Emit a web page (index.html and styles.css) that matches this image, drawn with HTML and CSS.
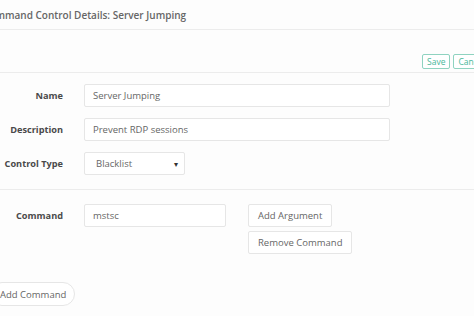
FILE: index.html
```html
<!DOCTYPE html>
<html lang="en">
<head>
    <meta charset="UTF-8">
    <meta name="viewport" content="width=device-width, initial-scale=1.0">
    <title>Command Control Details</title>
    <link rel="stylesheet" href="styles.css">
</head>
<body>
    <div class="header">
        <h1>Command Control Details: Server Jumping</h1>
    </div>

    <div class="toolbar">
        <button class="btn-outline">Save</button>
        <button class="btn-outline">Cancel</button>
    </div>

    <div class="section">
        <div class="form-row">
            <label for="name">Name</label>
            <input type="text" id="name" value="Server Jumping">
        </div>
        <div class="form-row">
            <label for="description">Description</label>
            <input type="text" id="description" value="Prevent RDP sessions">
        </div>
        <div class="form-row">
            <label for="controlType">Control Type</label>
            <div class="select">
                <span>Blacklist</span>
                <span class="caret">&#9662;</span>
            </div>
        </div>
    </div>

    <div class="commands">
        <div class="command-row">
            <label for="command">Command</label>
            <input type="text" id="command" class="short" value="mstsc">
            <div class="command-actions">
                <button class="btn">Add Argument</button>
                <button class="btn">Remove Command</button>
            </div>
        </div>
        <button class="btn btn-pill">Add Command</button>
    </div>
</body>
</html>
```

FILE: styles.css
```css
body {
    margin: 0;
    font-family: 'Open Sans', sans-serif;
    background-color: #fdfdfd;
    color: #555;
    overflow: hidden;
}
.header {
    height: 29px;
    border-bottom: 1px solid #ececec;
    display: flex;
    align-items: center;
}
h1 {
    margin: 0 0 0 -17px;
    font-size: 10px;
    font-weight: 600;
    color: #666;
    white-space: nowrap;
}
.toolbar {
    display: flex;
    gap: 3px;
    padding: 24px 0 3px 422px;
    border-bottom: 1px solid #ececec;
    white-space: nowrap;
}
.btn-outline {
    background: #fff;
    border: 1px solid #8fd3c0;
    border-radius: 2px;
    color: #49b79a;
    font-family: 'Open Sans', sans-serif;
    font-size: 8.5px;
    height: 15px;
    padding: 0 4px;
    line-height: 13px;
}
.section {
    padding: 11px 0 14px 0;
    border-bottom: 1px solid #ececec;
    display: flex;
    flex-direction: column;
    gap: 11px;
}
.form-row, .command-row {
    display: flex;
    align-items: center;
    gap: 21px;
}
.command-row {
    align-items: flex-start;
}
label {
    width: 63px;
    text-align: right;
    font-size: 9.2px;
    font-weight: 700;
    color: #4a4a4a;
    white-space: nowrap;
    line-height: 23px;
}
input, .select {
    box-sizing: border-box;
    height: 23px;
    width: 306px;
    padding: 0 8px;
    border: 1px solid #e6e6e6;
    border-radius: 2px;
    background: #fff;
    font-family: 'Open Sans', sans-serif;
    font-size: 9.5px;
    color: #666;
}
.select {
    width: 101px;
    display: flex;
    align-items: center;
    justify-content: space-between;
    padding: 0 6px 0 11px;
}
.caret {
    font-size: 8px;
    color: #333;
}
.commands {
    padding: 14px 0 0 0;
}
input.short {
    width: 142px;
}
.command-actions {
    display: flex;
    flex-direction: column;
    align-items: flex-start;
    gap: 4px;
    margin-left: 1px;
}
.btn {
    box-sizing: border-box;
    height: 23px;
    padding: 0 9px;
    background: #fff;
    border: 1px solid #e6e6e6;
    border-radius: 2px;
    font-family: 'Open Sans', sans-serif;
    font-size: 9.5px;
    color: #666;
    white-space: nowrap;
}
.btn-pill {
    margin: 28px 0 0 -10px;
    height: 24px;
    padding: 0 8px 0 9px;
    border-radius: 12px;
}
```
